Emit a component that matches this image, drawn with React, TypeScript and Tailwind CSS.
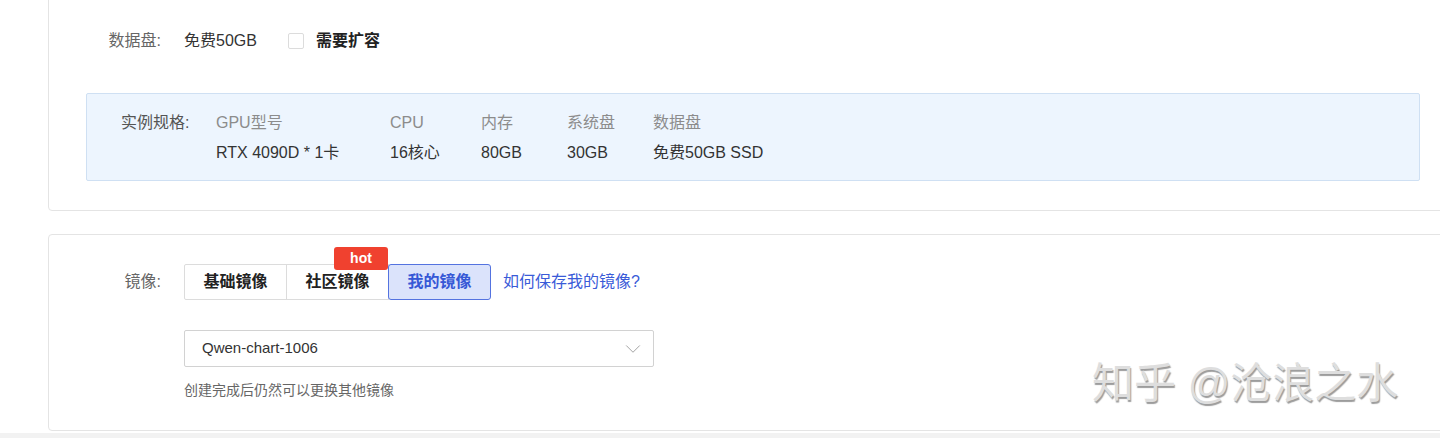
import { ChevronDown } from "lucide-react"

const specs = [
  { label: "GPU型号", value: "RTX 4090D * 1卡", w: "w-[174px]" },
  { label: "CPU", value: "16核心", w: "w-[91px]" },
  { label: "内存", value: "80GB", w: "w-[86px]" },
  { label: "系统盘", value: "30GB", w: "w-[86px]" },
  { label: "数据盘", value: "免费50GB SSD", w: "w-[160px]" },
]

export default function App() {
  return (
    <div className="relative flex h-[438px] flex-col overflow-hidden bg-white font-['Liberation_Sans','Noto_Sans_CJK_SC',sans-serif] text-[16px] text-[#333]">
      {/* instance config card */}
      <div className="-mr-4 -mt-[10px] ml-[48px] h-[221px] shrink-0 rounded border border-[#e4e4e4] pt-[38px]">
        <div className="flex h-6 items-center">
          <div className="w-[112px] text-right text-[#666]">数据盘:</div>
          <div className="ml-[23px] w-[76px]">免费50GB</div>
          <span className="ml-[28px] h-4 w-4 rounded-[2px] border border-[#dcdcdc] bg-white" />
          <span className="ml-[12px] font-semibold text-[#222]">需要扩容</span>
        </div>
        <div className="ml-[37px] mt-[40px] flex h-[88px] w-[1334px] items-start rounded-[2px] border border-[#cfe0f3] bg-[#edf5fe] pt-[17px]">
          <div className="ml-[34px] w-[95px] text-[#555]">实例规格:</div>
          {specs.map((s) => (
            <div key={s.label} className={`${s.w} flex flex-col gap-[6px]`}>
              <span className="text-[#8c8c8c]">{s.label}</span>
              <span className="text-[#333]">{s.value}</span>
            </div>
          ))}
        </div>
      </div>

      {/* image card */}
      <div className="-mr-4 ml-[48px] mt-[23px] h-[197px] shrink-0 rounded border border-[#e4e4e4] pt-[29px]">
        <div className="flex h-[36px] items-center">
          <div className="w-[112px] text-right text-[#666]">镜像:</div>
          <div className="ml-[23px] flex h-[36px] text-[16px] font-semibold">
            <button className="h-full w-[103px] rounded-l-[2px] border border-[#dcdcdc] bg-white text-[#222]">
              基础镜像
            </button>
            <button className="relative -ml-px h-full w-[103px] border border-[#dcdcdc] bg-white text-[#222]">
              社区镜像
              <span className="absolute -top-[18px] right-0 flex h-[23px] w-[54px] items-center justify-center rounded-[3px] bg-[#f0412f] text-[14px] font-semibold text-white">
                hot
              </span>
            </button>
            <button className="relative -ml-px h-full w-[103px] rounded-[3px] border border-[#5473e0] bg-[#dbe3fb] text-[#3658d6]">
              我的镜像
            </button>
          </div>
          <a className="ml-[12px] text-[#3a5bd8]">如何保存我的镜像?</a>
        </div>
        <div className="ml-[135px] mt-[30px] flex h-[37px] w-[470px] items-center justify-between rounded-[2px] border border-[#d2d2d2] pl-[17px] pr-[7px]">
          <span className="text-[15px] text-[#333]">Qwen-chart-1006</span>
          <ChevronDown className="h-[26px] w-[26px] text-[#a0a0a0]" strokeWidth={0.9} />
        </div>
        <div className="ml-[135px] mt-[13px] text-[14px] text-[#666]">创建完成后仍然可以更换其他镜像</div>
      </div>

      <div className="mt-[2px] flex-1 bg-[#f2f2f2]" />

      {/* watermark */}
      <div className="absolute left-[1092px] top-[352px] whitespace-nowrap text-[42px] text-[#dedede] [text-shadow:1px_2px_1px_#9c9c9c]">
        知乎 @沧浪之水
      </div>
    </div>
  )
}
